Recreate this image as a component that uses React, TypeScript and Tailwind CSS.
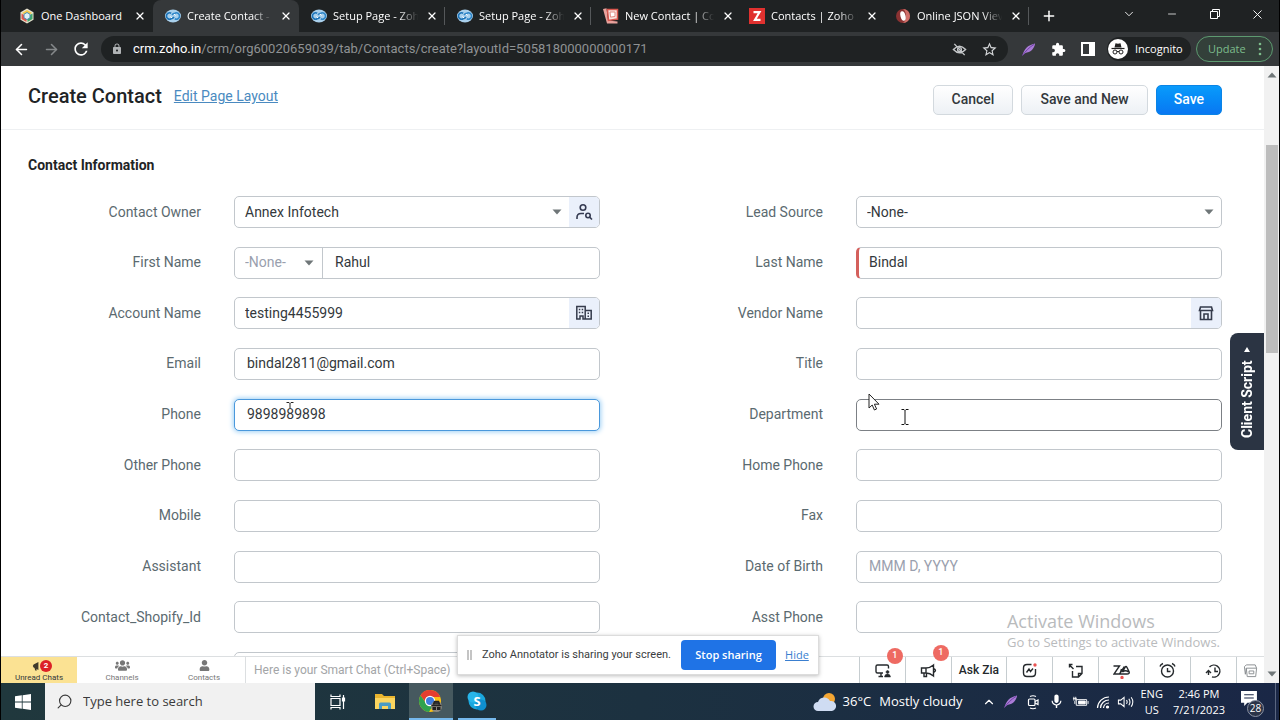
import type { ReactNode } from 'react';
import { ArrowLeft, ArrowRight, ChevronDown, ChevronUp, Minus, Plus, Search, X } from 'lucide-react';
import { FaUser, FaUsers } from 'react-icons/fa';
import { MdExtension, MdLock, MdMic, MdRefresh, MdStarBorder } from 'react-icons/md';

function ZohoCrmIcon() {
    return (
        <svg viewBox="0 0 16 14" className="h-[14px] w-4">
            <ellipse cx="8" cy="7" rx="8" ry="6.5" fill="#a9d0ec" />
            <g fill="none" strokeWidth="1.6">
                <path d="M6.200 4.200A3.200 3.200 0 1 0 6.200 9.800Q7.800 9.800 9 8" stroke="#1b73b8" />
                <path d="M9.800 9.800A3.200 3.200 0 1 0 9.800 4.200Q8.200 4.200 7 6" stroke="#2f86c8" />
                <path d="M5.500 7.500L7 9M10.500 6.500L9 5" stroke="#fff" strokeWidth="1" />
            </g>
        </svg>
    );
}

function CubeIcon() {
    return (
        <svg viewBox="0 0 16 16" className="size-4">
            <path d="M8 .5l6.500 3.700v7.600L8 15.500l-6.500-3.700V4.200z" fill="#e8e3cf" />
            <path d="M8 2l5 3-5 3-5-3z" fill="#f2c94c" />
            <path d="M2.500 5.600L7.500 8.600v5.400l-5-3z" fill="#e2574c" />
            <path d="M13.500 5.600L8.500 8.600v5.400l5-3z" fill="#3fa66a" />
            <path d="M8 4.500l3 1.800v3.500l-3 1.800-3-1.800V6.300z" fill="#dff0f5" stroke="#4a8fb5" />
        </svg>
    );
}

function CreatorIcon() {
    return (
        <svg viewBox="0 0 16 16" className="size-4">
            <path d="M0 1l3.500-.8L5 12.500l9.500 1v2L4 15.500z" fill="#e9a29c" />
            <path d="M4.500 1.500h10v9.500l-9 1.500z" fill="#f7e3df" stroke="#d9584f" strokeWidth="1.500" />
            <path d="M7 4h5v4.500l-4.500.6z" fill="#fff" stroke="#e08a83" />
        </svg>
    );
}

function ZohoZIcon() {
    return (
        <svg viewBox="0 0 16 16" className="size-4">
            <path d="M0 0h16v16H0z" fill="#e0312f" />
            <path d="M4.500 4.200h6L6 11.800h5.500" fill="none" stroke="#fff" strokeWidth="2.200" />
        </svg>
    );
}

function JsonIcon() {
    return (
        <svg viewBox="0 0 16 16" className="size-4">
            <circle cx="8" cy="8" r="7" fill="#8a3232" />
            <path d="M8 1a7 7 0 0 1 0 14c4-3 4-11 0-14z" fill="#d0706a" />
            <ellipse cx="8" cy="8" rx="2.500" ry="4.800" fill="#fff" transform="rotate(-15 8 8)" />
        </svg>
    );
}

function FeatherIcon() {
    return (
        <svg viewBox="0 0 16 16" className="size-[15px]">
            <path d="M1.500 14.500C3 8 7 3 15 1.500c-.5 4-3 8-7.500 9.500-2 .6-3 .8-4 1.700z" fill="#a97bd6" />
            <path d="M1.500 14.500C5 9.500 9 5.500 14 2.500" stroke="#6f3fa3" fill="none" />
        </svg>
    );
}

function IncognitoIcon() {
    return (
        <svg viewBox="0 0 20 20" className="size-5">
            <circle cx="10" cy="10" r="10" fill="#fff" />
            <path d="M6.500 8.500l1-4.300 2.500.6 2.500-.6 1 4.300z" fill="#222" />
            <path d="M3.500 9.500h13" stroke="#222" strokeWidth="1.200" />
            <g fill="none" stroke="#222">
                <circle cx="7" cy="13" r="2" />
                <circle cx="13" cy="13" r="2" />
                <path d="M9 12.700q1-.7 2 0" />
            </g>
        </svg>
    );
}

const tabs = [
    { title: 'One Dashboard', icon: <CubeIcon /> },
    { title: 'Create Contact -', icon: <ZohoCrmIcon />, active: true, fade: true },
    { title: 'Setup Page - Zoh', icon: <ZohoCrmIcon />, fade: true },
    { title: 'Setup Page - Zoh', icon: <ZohoCrmIcon />, fade: true },
    { title: 'New Contact | Co', icon: <CreatorIcon />, fade: true },
    { title: 'Contacts | Zoho I', icon: <ZohoZIcon />, fade: true },
    { title: 'Online JSON Viev', icon: <JsonIcon />, fade: true },
];

function TabStrip() {
    return (
        <div className="flex h-8 items-stretch bg-[#1f2223] pl-[6px] text-white">
            {tabs.map((tab, i) => (
                <div
                    key={i}
                    className={
                        tab.active
                            ? 'flex w-[146px] items-center gap-1.5 rounded-t-lg bg-[#35383a] pr-[7px] pl-3'
                            : 'flex w-[146px] items-center gap-1.5 pl-3'
                    }
                >
                    <span className="shrink-0">{tab.icon}</span>
                    <span
                        className={
                            tab.fade
                                ? 'flex-1 text-[11px] whitespace-nowrap [mask-image:linear-gradient(to_right,black_75%,transparent_98%)]'
                                : 'flex-1 text-[11px] whitespace-nowrap'
                        }
                    >
                        {tab.title}
                    </span>
                    <button type="button" aria-label="Close tab">
                        <X size={12} strokeWidth={2.5} />
                    </button>
                    {!tab.active && (
                        <span className={i > 1 ? 'h-[18px] w-px bg-[#55585a]' : 'h-[18px] w-px'} />
                    )}
                </div>
            ))}
            <button type="button" aria-label="New tab" className="ml-3">
                <Plus size={16} strokeWidth={2.2} />
            </button>
            <div className="ml-auto flex pb-1">
                <button type="button" aria-label="Search tabs" className="flex w-[43px] items-center justify-center">
                    <ChevronDown size={14} strokeWidth={1.5} />
                </button>
                <button type="button" aria-label="Minimize" className="flex w-[43px] items-center justify-center">
                    <Minus size={12} strokeWidth={1.5} />
                </button>
                <button type="button" aria-label="Restore" className="flex w-[43px] items-center justify-center">
                    <svg viewBox="0 0 12 12" className="size-3" fill="none" stroke="currentColor">
                        <path d="M1.500 3.500h7v7h-7zM3.500 3.500v-2h7v7h-2" />
                    </svg>
                </button>
                <button type="button" aria-label="Close" className="flex w-[43px] items-center justify-center">
                    <X size={15} strokeWidth={1.5} />
                </button>
            </div>
        </div>
    );
}

function Toolbar() {
    return (
        <div className="flex h-[34px] items-center bg-[#35383a] pr-1.5 pl-3 text-white">
            <button type="button" aria-label="Back">
                <ArrowLeft size={17} strokeWidth={2.2} />
            </button>
            <button type="button" aria-label="Forward" className="ml-[13px] text-[#85888a]">
                <ArrowRight size={17} strokeWidth={2.2} />
            </button>
            <button type="button" aria-label="Reload" className="ml-[11px]">
                <MdRefresh size={20} />
            </button>
            <div className="ml-[10px] flex h-[26px] flex-1 items-center rounded-full bg-[#1f2223] pr-2.5 pl-2.5">
                <MdLock size={12} className="text-[#b0b3b5]" />
                <span className="ml-2.5 font-[Roboto,sans-serif] text-[13px] text-[#8f9294]">
                    <span className="text-white">crm.zoho.in</span>
                    /crm/org60020659039/tab/Contacts/create?layoutId=505818000000000171
                </span>
                <svg viewBox="0 0 16 16" className="ml-auto size-[15px]" fill="none" stroke="#c4c7c9" strokeWidth="1.500">
                    <path d="M1.500 8Q8 1 14.500 8Q8 15 1.500 8zM2.500 2l11 12" />
                    <circle cx="8" cy="8" r="2" />
                </svg>
                <MdStarBorder size={17} className="ml-[14px] text-[#d4d7d9]" />
            </div>
            <div className="ml-[13px] flex items-center gap-[15px]">
                <FeatherIcon />
                <MdExtension size={15} />
                <svg viewBox="0 0 14 14" className="size-[14px]">
                    <path d="M0 0h14v14H0zM2 2v10h6V2z" fill="#fff" fillRule="evenodd" />
                </svg>
            </div>
            <div className="ml-3 flex h-6 w-[84px] items-center gap-[7px] rounded-full bg-[#1f2223] pl-px text-[11px]">
                <IncognitoIcon />
                Incognito
            </div>
            <button
                type="button"
                className="ml-[5px] flex h-[26px] w-[77px] items-center justify-between rounded-full border border-[#5d9a70] bg-[#33403a] pr-2.5 pl-[11px] text-[11px] text-[#7dbd8c]"
            >
                Update
                <svg viewBox="0 0 4 14" className="h-[14px] w-1" fill="currentColor">
                    <circle cx="2" cy="2" r="1.300" />
                    <circle cx="2" cy="7" r="1.300" />
                    <circle cx="2" cy="12" r="1.300" />
                </svg>
            </button>
        </div>
    );
}

function PersonSearchIcon() {
    return (
        <svg viewBox="0 0 18 18" className="size-[18px]" fill="none" stroke="#353b52" strokeWidth="1.600">
            <circle cx="8" cy="4.500" r="2.800" />
            <path d="M2 16v-1.500Q2 10.500 6 10.500H9" />
            <circle cx="13" cy="12.500" r="2.200" />
            <path d="M14.600 14.200L17 16.500" />
        </svg>
    );
}

function BuildingIcon() {
    return (
        <svg viewBox="0 0 18 16" className="h-4 w-[18px]" fill="none" stroke="#353b4c" strokeWidth="1.500">
            <path d="M5 14H1.800V1.500h8.400V14H8v-3H5zM10.200 5.500h6V14h-6" />
            <path d="M3.800 4.500h1.500M6.700 4.500h1.500M3.800 7.500h1.500M6.700 7.500h1.500M12.500 8.300h1.500M12.500 11.300h1.500" />
        </svg>
    );
}

function StoreIcon() {
    return (
        <svg viewBox="0 0 16 16" className="size-4" fill="none" stroke="#353b4c" strokeWidth="1.600">
            <path d="M2.500 2h11l1 3.500h-13zM2.500 5.500v9h11v-9M6 14.500V9h4v5.500" />
        </svg>
    );
}

function Caret({ className = '' }: { className?: string }) {
    return (
        <svg viewBox="0 0 10 6" className={`pointer-events-none h-1.5 w-2.5 ${className}`}>
            <path d="M.5.500h9L5 5.500z" fill="#6f7678" />
        </svg>
    );
}

type FieldProps = {
    label: string;
    value?: string;
    placeholder?: string;
    kind?: 'text' | 'select' | 'lookup' | 'name';
    state?: 'focus' | 'hover' | 'required';
    action?: ReactNode;
};

const borders = {
    focus: 'border-[#4a98dc] shadow-[0_0_5px_1px_#9fd0f5]',
    hover: 'border-[#7c8085]',
    required: 'border-[#c2c7cc] border-l-3 border-l-[#d4605c]',
    normal: 'border-[#c2c7cc]',
};

function Field({ label, value = '', placeholder, kind = 'text', state, action }: FieldProps) {
    const id = label.toLowerCase().replace(/\W/g, '-');
    const padding = kind === 'lookup' ? 'pl-[10px]' : state === 'required' ? 'pl-[10px]' : 'pl-3';

    return (
        <div className="flex items-center gap-[33px] pr-[23px]">
            <label htmlFor={id} className="w-[200px] shrink-0 text-right text-[#5b6a70]">
                {label}
            </label>
            <div
                className={`flex h-8 min-w-0 flex-1 items-stretch overflow-hidden rounded-[5px] border bg-white ${borders[state ?? 'normal']}`}
            >
                {kind === 'name' && (
                    <div className="relative flex w-[88px] items-center border-r border-[#c2c7cc]">
                        <select aria-label="Salutation" className="h-full w-full appearance-none pl-[10px] text-[#9a9fae]">
                            <option>-None-</option>
                        </select>
                        <Caret className="absolute right-2" />
                    </div>
                )}
                {kind === 'select' ? (
                    <div className="relative flex flex-1 items-center">
                        <select id={id} className="h-full w-full appearance-none pl-[10px]">
                            <option>{value}</option>
                        </select>
                        <Caret className="absolute right-[7px]" />
                    </div>
                ) : (
                    <input
                        id={id}
                        defaultValue={value}
                        placeholder={placeholder}
                        className={`w-full min-w-0 flex-1 outline-none placeholder:text-[#9a9fae] ${padding}`}
                    />
                )}
                {action && (
                    <button
                        type="button"
                        aria-label={`Look up ${label}`}
                        className="flex w-[30px] items-center justify-center bg-[#eaf0fb]"
                    >
                        {action}
                    </button>
                )}
            </div>
        </div>
    );
}

const fields: FieldProps[] = [
    { label: 'Contact Owner', value: 'Annex Infotech', kind: 'select', action: <PersonSearchIcon /> },
    { label: 'Lead Source', value: '-None-', kind: 'select' },
    { label: 'First Name', value: 'Rahul', kind: 'name' },
    { label: 'Last Name', value: 'Bindal', state: 'required' },
    { label: 'Account Name', value: 'testing4455999', kind: 'lookup', action: <BuildingIcon /> },
    { label: 'Vendor Name', kind: 'lookup', action: <StoreIcon /> },
    { label: 'Email', value: 'bindal2811@gmail.com' },
    { label: 'Title' },
    { label: 'Phone', value: '9898989898', state: 'focus' },
    { label: 'Department', state: 'hover' },
    { label: 'Other Phone' },
    { label: 'Home Phone' },
    { label: 'Mobile' },
    { label: 'Fax' },
    { label: 'Assistant' },
    { label: 'Date of Birth', placeholder: 'MMM D, YYYY' },
    { label: 'Contact_Shopify_Id' },
    { label: 'Asst Phone' },
    { label: '' },
];

function ContactForm() {
    return (
        <form className="min-h-0 flex-1 overflow-hidden font-[Roboto,sans-serif] text-[14px] text-[#33383c]">
            <header className="flex h-16 items-center border-b border-[#eef0f2] pr-[42px] pl-[27px]">
                <h1 className="pb-1 text-[20px] font-medium text-[#1f2426]">Create Contact</h1>
                <a href="#layout" className="ml-3 pb-0.5 text-[#4a8ac0] underline">
                    Edit Page Layout
                </a>
                <div className="ml-auto flex gap-2 pt-1 font-medium">
                    <button
                        type="button"
                        className="h-[30px] rounded-[5px] border border-[#d3d9de] bg-linear-to-b from-white to-[#edf1f5] px-[18px]"
                    >
                        Cancel
                    </button>
                    <button
                        type="button"
                        className="h-[30px] rounded-[5px] border border-[#d3d9de] bg-linear-to-b from-white to-[#edf1f5] px-[18px]"
                    >
                        Save and New
                    </button>
                    <button
                        type="submit"
                        className="h-[30px] rounded-[5px] border border-[#0a84e6] bg-linear-to-b from-[#0a9bfb] to-[#0a77f2] px-[17px] text-white"
                    >
                        Save
                    </button>
                </div>
            </header>
            <h2 className="pt-6 pl-[27px] leading-[22px] font-bold text-[#1f2426]">Contact Information</h2>
            <div className="mt-5 grid min-h-[488px] grid-cols-2 content-between pr-[19px]">
                {fields.map((field) => (
                    <Field key={field.label} {...field} />
                ))}
            </div>
        </form>
    );
}

const chatTabs = [
    { label: 'Channels', icon: <FaUsers size={15} /> },
    { label: 'Contacts', icon: <FaUser size={11} /> },
];

const tools = [
    {
        label: 'Screen share',
        badge: '-top-[9px]',
        icon: (
            <>
                <path d="M9 11H3.500Q2 11 2 9.500v-5Q2 3 3.500 3h9.500Q14.500 3 14.500 4.500v2M7 11v3.500M4.500 14.500H9" />
                <path d="M13.500 8.500a1.500 1.500 0 1 0 .1 0zM10.500 15q.3-3 3-3t3 3z" fill="currentColor" strokeWidth=".5" />
            </>
        ),
    },
    {
        label: 'Announcements',
        badge: '-top-3',
        icon: <path d="M1.500 6h4.500q4 0 7.500-3v11q-3.500-3-7.500-3H1.500zM4 11v3.500h2.500V11M6 6v5M13.500 6.500q4 2 0 4" />,
    },
    { label: 'Ask Zia' },
    {
        label: 'Insights',
        icon: <path d="M10.500 2.500H6q-3.500 0-3.500 3.500v5q0 3.500 3.500 3.500h5q3.500 0 3.500-3.500V7M5.500 10.500L8 7l1.500 2.500L12 6.500" />,
        dot: 'top',
    },
    {
        label: 'Notes',
        icon: <path d="M9 4.500h6v7l-3.500 3.500H5.500V9M11.500 15v-3.500H15M2.500 3L6.500 7M2.500 5.500v-3h3" />,
    },
    {
        label: 'Zia',
        icon: <path d="M.5 4h6L1 12h5.500L11.500 4.500M8.500 7L7 12M7 12h7Q17 12 16 9.500L14 5.500Q13 3.500 12 5.500L9.500 10q3-2.500 6 0" />,
        dot: 'bottom',
    },
    {
        label: 'Reminders',
        icon: (
            <>
                <circle cx="8.500" cy="9" r="6" />
                <path d="M8.500 6v3.500h3M1 4.500q.5-2 3-3M16 4.500q-.5-2-3-3" />
            </>
        ),
    },
    {
        label: 'Recent items',
        icon: <path d="M4.500 5A6 6 0 1 1 7 14.800M10 5.500v4h3M3.500 13V9M1 11l2.500-2.500L6 11" />,
    },
];

function ChatBar() {
    return (
        <div className="flex h-[27px] shrink-0 border-t border-[#dcdfe1] bg-white font-[Roboto,sans-serif]">
            <button
                type="button"
                className="flex w-[76px] flex-col items-center bg-[#fbe293] text-[8px] leading-[8px] text-[#33383c]"
            >
                <span className="flex h-[17px] items-center pl-1.5">
                    <svg viewBox="0 0 10 12" className="h-3 w-2">
                        <path d="M8 1L2 4Q0 6 2 8l6 3zM3 8l1 3.500h2L5 8z" fill="#3f3a2b" />
                    </svg>
                    <span className="flex size-3 items-center justify-center rounded-full bg-[#dc2127] text-[8px] font-bold text-white">
                        2
                    </span>
                </span>
                Unread Chats
            </button>
            <div className="flex w-[168px] justify-around pl-1">
                {chatTabs.map((tab) => (
                    <button
                        key={tab.label}
                        type="button"
                        className="flex w-20 flex-col items-center text-[8px] leading-[8px] text-[#777]"
                    >
                        <span className="flex h-[17px] items-center">{tab.icon}</span>
                        {tab.label}
                    </button>
                ))}
            </div>
            <input
                aria-label="Smart Chat"
                placeholder="Here is your Smart Chat (Ctrl+Space)"
                className="min-w-0 flex-1 border-l border-[#dcdfe1] pl-2 text-[12px] outline-none placeholder:text-[#a3a5a7]"
            />
            {tools.map((tool) => (
                <button
                    key={tool.label}
                    type="button"
                    aria-label={tool.label}
                    className="relative flex min-w-[46px] items-center justify-center border-l border-[#c6cdd0] px-[7px] text-[12px] font-medium text-[#25292c]"
                >
                    {tool.icon ? (
                        <svg viewBox="0 0 17 17" className="size-[17px]" fill="none" stroke="currentColor" strokeWidth="1.400">
                            {tool.icon}
                            {tool.dot && (
                                <circle
                                    cx={tool.dot === 'top' ? 14 : 9}
                                    cy={tool.dot === 'top' ? 3 : 15.5}
                                    r="1"
                                    fill="#e8504f"
                                    stroke="#e8504f"
                                />
                            )}
                        </svg>
                    ) : (
                        tool.label
                    )}
                    {tool.badge && (
                        <span
                            className={`absolute right-0.5 flex size-4 items-center justify-center rounded-full bg-[#ee6a62] text-[9px] text-white ${tool.badge}`}
                        >
                            1
                        </span>
                    )}
                </button>
            ))}
            <button type="button" aria-label="Clipboard" className="flex w-7 items-center justify-center border-l border-[#c6cdd0]">
                <svg viewBox="0 0 16 16" className="size-[15px]" fill="none" stroke="#888c8f">
                    <path d="M3.500 5.500h11l-1 9h-9zM3.500 5.500L2.500 12 1.500 4l2-2h9.500l1.500 3.500M6.500 8.500h5v3h-5z" />
                </svg>
            </button>
        </div>
    );
}

function Scrollbar() {
    return (
        <div className="flex w-[15px] flex-col items-center bg-[#f1f1f1] pt-1.5 pb-1.5">
            <Caret className="w-2 rotate-180" />
            <div className="mt-[67px] h-[208px] w-3 bg-[#bdbdbd]" />
            <Caret className="mt-auto w-2" />
        </div>
    );
}

function SharingBar() {
    return (
        <div className="absolute bottom-2 left-[456px] flex h-10 items-center border border-[#dcdcdc] bg-white pr-[9px] pl-[9px] text-[11px] text-[#3a3d40] shadow-[0_1px_4px_#0004]">
            <span className="h-[10px] w-[5px] border-x-2 border-[#c4c4c4]" />
            <span className="ml-2.5 font-[Roboto,sans-serif]">Zoho Annotator is sharing your screen.</span>
            <button type="button" className="ml-2.5 h-[30px] w-[95px] rounded bg-[#1f73e6] font-semibold text-white">
                Stop sharing
            </button>
            <a href="#hide" className="ml-[9px] text-[#3a7fd0] underline">
                Hide
            </a>
        </div>
    );
}

function ChromeIcon() {
    return (
        <svg viewBox="0 0 26 24" className="h-6 w-[26px]">
            <circle cx="12" cy="12" r="11" fill="#fbc116" />
            <path d="M2.500 6.500A11 11 0 0 1 22.200 8H12a4.500 4.500 0 0 0-4.200 5.500z" fill="#e53e30" />
            <path d="M2.500 6.500A11 11 0 0 0 11 23l5-8.500A4.500 4.500 0 0 1 8 14z" fill="#2fa24f" />
            <circle cx="12" cy="12" r="5.200" fill="#fff" />
            <circle cx="12" cy="12" r="4" fill="#3f7de0" />
            <circle cx="18.500" cy="17.500" r="5.500" fill="#8d8a82" />
            <path d="M13.500 16.500h10M15.500 15.500l1-3h4l1 3" stroke="#222" strokeWidth="1.500" fill="#333" />
            <path d="M14.500 18H18v3h-3.500zM19 18h3.500v3H19z" fill="#222" />
        </svg>
    );
}

function Tray() {
    return (
        <div className="flex items-center gap-[7px] text-white">
            <ChevronUp size={14} />
            <FeatherIcon />
            <svg viewBox="0 0 16 16" className="size-4" fill="none" stroke="currentColor" strokeWidth="1.200">
                <rect x="3.500" y="5" width="6.500" height="6.500" rx="1" />
                <path d="M10 7.500l3-1.500v4.500l-3-1.500M5 2.500q3-1.500 6 0M5 14q3 1.500 6 0" />
            </svg>
            <MdMic size={17} />
            <svg viewBox="0 0 18 14" className="h-[14px] w-[17px]" fill="none" stroke="currentColor">
                <path d="M4.500 4.500h11v6h-11zM17 6v3M1 3.500h4M2 1.500v4M4 1.500v4M3 6v3" />
                <path d="M7 6h7v3H7z" fill="currentColor" />
            </svg>
            <svg viewBox="0 0 14 14" className="size-[14px]" fill="none" stroke="currentColor" strokeWidth="1.200">
                <path d="M1.500 13A11.500 11.500 0 0 1 13 2M4.500 13A8.500 8.500 0 0 1 13 5M7.500 13A5.500 5.500 0 0 1 13 8" />
                <circle cx="11.500" cy="12" r="1" fill="currentColor" />
            </svg>
            <svg viewBox="0 0 18 14" className="h-[14px] w-[17px]" fill="none" stroke="currentColor" strokeWidth="1.100">
                <path d="M1.500 5H4l3.500-3v10L4 9H1.500zM10 5q1.500 2 0 4M12.500 3.500q2.500 3.500 0 7M15 2q3.500 5 0 10" />
            </svg>
        </div>
    );
}

function Taskbar() {
    return (
        <footer className="flex h-[37px] shrink-0 items-stretch bg-linear-to-r from-[#20383d] via-[#1c3140] to-[#1a2746] text-white">
            <button type="button" aria-label="Start" className="flex w-11 items-center justify-center">
                <svg viewBox="0 0 16 16" className="size-4" fill="#fff">
                    <path d="M0 2.200l6.800-.9v6.200H0zM7.600 1.200L16 0v7.500H7.600zM0 8.400h6.800v6.300L0 13.800zM7.600 8.400H16V16l-8.400-1.200z" />
                </svg>
            </button>
            <label className="flex w-[270px] items-center bg-[#f1f1f1] pl-[11px] text-[#3a3a3a]">
                <Search size={17} strokeWidth={1.6} className="-scale-x-100" />
                <input
                    aria-label="Type here to search"
                    placeholder="Type here to search"
                    className="ml-2.5 w-40 text-[13px] outline-none placeholder:text-[#3a3a3a]"
                />
            </label>
            <button type="button" aria-label="Task view" className="flex w-[46px] items-center justify-center">
                <svg viewBox="0 0 16 16" className="size-4" fill="none" stroke="#fff" strokeWidth="1.200">
                    <path d="M1 4.500h9v7H1zM1 .500v2h9v-2M1 15.500v-2h9v2M13.500 1v14" />
                    <path d="M12.500 4h2v3h-2z" fill="#fff" />
                </svg>
            </button>
            <button type="button" aria-label="File Explorer" className="flex w-12 items-center justify-center">
                <svg viewBox="0 0 20 17" className="h-[17px] w-5">
                    <path d="M0 1h7l2 2h11v13H0z" fill="#eab52f" />
                    <path d="M0 5h20v11H0z" fill="#fbd55f" />
                    <path d="M4 16v-5q0-1.500 1.500-1.500h9q1.500 0 1.500 1.500v5h-3v-3H7v3z" fill="#4a9bc4" />
                </svg>
            </button>
            <button
                type="button"
                aria-label="Chrome"
                className="flex w-[44px] items-center justify-center border-b-2 border-[#76b9ed] bg-[#46595f]"
            >
                <ChromeIcon />
            </button>
            <button
                type="button"
                aria-label="Skype"
                className="ml-[5px] flex w-[38px] items-center justify-center border-b-2 border-[#76b9ed]"
            >
                <svg viewBox="0 0 20 20" className="size-5">
                    <circle cx="10" cy="10" r="8.500" fill="#19a7de" />
                    <circle cx="6" cy="6" r="5.500" fill="#27b5ea" />
                    <circle cx="14" cy="14" r="5.500" fill="#0f8fcf" />
                    <text x="10" y="14.500" textAnchor="middle" fontSize="13" fontWeight="700" fill="#fff">
                        S
                    </text>
                </svg>
            </button>
            <div className="ml-auto flex items-center text-[13px]">
                <svg viewBox="0 0 24 20" className="h-5 w-6">
                    <circle cx="16" cy="7" r="6" fill="#f5a733" />
                    <path d="M5 19a4.500 4.500 0 0 1 0-9 6.500 6.500 0 0 1 12-1 5 5 0 0 1 2 10z" fill="#cfdcf2" />
                </svg>
                <span className="ml-1.5">36°C</span>
                <span className="mr-5 ml-2">Mostly cloudy</span>
                <Tray />
                <div className="ml-1.5 text-center text-[11px] leading-4">
                    ENG
                    <br />
                    US
                </div>
                <div className="ml-2.5 text-center text-[11px] leading-4">
                    2:46 PM
                    <br />
                    7/21/2023
                </div>
                <div className="relative mr-2.5 ml-4 h-6 w-[24px]">
                    <svg viewBox="0 0 16 16" className="size-[17px]">
                        <path d="M0 1h15v11H6l-3 3v-3H0z" fill="#fff" />
                        <path d="M3 4.500h9M3 7.500h9" stroke="#1a2746" />
                    </svg>
                    <span className="absolute top-2.5 left-1.5 flex size-[17px] items-center justify-center rounded-full border border-[#8b93a5] bg-[#2b3448] text-[10px]">
                        28
                    </span>
                </div>
                <span className="mr-[3px] h-full w-px bg-[#5a6680]" />
            </div>
        </footer>
    );
}

export default function App() {
    return (
        <div className="flex h-screen flex-col overflow-hidden border-x border-black bg-white font-['Open_Sans',sans-serif]">
            <TabStrip />
            <Toolbar />
            <main className="relative flex min-h-0 flex-1">
                <div className="flex min-w-0 flex-1 flex-col">
                    <ContactForm />
                    <ChatBar />
                </div>
                <Scrollbar />
                <button
                    type="button"
                    className="absolute top-[267px] right-[15px] flex h-[117px] w-[34px] rotate-180 items-center gap-2 rounded-r-lg bg-[#2b3443] pt-3 font-[Roboto,sans-serif] text-[14px] font-bold text-white [writing-mode:vertical-rl]"
                >
                    Client Script
                    <svg viewBox="0 0 6 5" className="h-[5px] w-1.5">
                        <path d="M0 0h6L3 5z" fill="#fff" />
                    </svg>
                </button>
                <div className="pointer-events-none absolute right-[59px] bottom-8 text-[#b9bbbd]">
                    <p className="text-[18px] leading-[23px]">Activate Windows</p>
                    <p className="text-[13px] leading-[18px]">Go to Settings to activate Windows.</p>
                </div>
                <svg viewBox="0 0 12 18" className="pointer-events-none absolute top-[327px] left-[867px] h-[18px] w-3">
                    <path d="M1 1v14l3.200-3 2.200 5 2.200-1-2.200-4.800H11z" fill="#fff" stroke="#222" />
                </svg>
                <svg
                    viewBox="0 0 8 16"
                    className="pointer-events-none absolute top-[343px] left-[900px] h-4 w-2"
                    fill="none"
                    stroke="#111"
                >
                    <path d="M.5.500h2.500l1 1 1-1h2.500M4 1.500v13M.5 15.500h2.500l1-1 1 1h2.500" />
                </svg>
                <svg viewBox="0 0 8 6" className="pointer-events-none absolute top-[336px] left-[285px] h-1.5 w-2" fill="none" stroke="#222">
                    <path d="M.5.500h2.500l1 1 1-1h2.500M4 1.500V6" />
                </svg>
                <SharingBar />
            </main>
            <Taskbar />
        </div>
    );
}
